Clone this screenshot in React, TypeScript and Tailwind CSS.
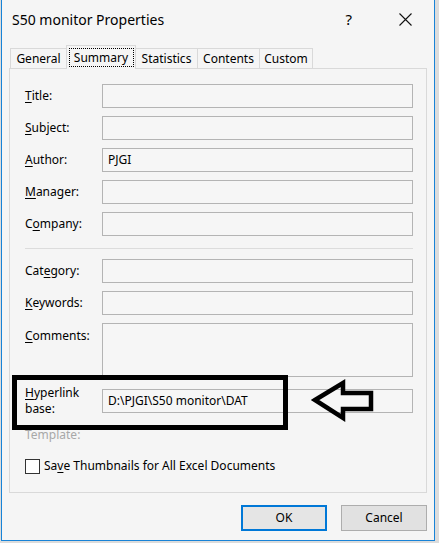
import React from "react";

const font = { fontFamily: '"Noto Sans", "Liberation Sans", sans-serif' };

const Label = ({ pre, acc, post }: { pre?: string; acc: string; post: string }) => (
  <span>
    {pre}
    <span className="underline underline-offset-2 decoration-1">{acc}</span>
    {post}
  </span>
);

const Field = ({ label, value, tall }: { label: React.ReactNode; value?: string; tall?: boolean }) => (
  <div className={`flex ${tall ? "items-start" : "items-center"}`}>
    <div className={`w-[77px] shrink-0 ${tall ? "pt-[4px]" : ""}`}>{label}</div>
    <div
      className={`w-[311px] ${tall ? "h-[54px]" : "h-[24px]"} border border-[#b4b4b4] bg-[#f6f6f6] px-[5px] flex ${tall ? "items-start" : "items-center"} text-black`}
    >
      {value}
    </div>
  </div>
);

export default function App() {
  return (
    <div className="relative w-[439px] h-[543px] overflow-hidden bg-[#dcdcdc] text-[12px] text-black" style={font}>
      <div className="ml-[1px] w-[434px] h-[541px] border-x border-b border-[#1883d7] bg-[#f5f5f5] flex flex-col">
        {/* Title bar */}
        <div className="h-[40px] flex items-center pl-[10px] pr-[22px] shrink-0">
          <span className="text-[14px] pb-[2px]">S50 monitor Properties</span>
          <span className="ml-auto text-[15px] pb-[2px]">?</span>
          <svg className="ml-[47px] mb-[2px]" width="13" height="13" viewBox="0 0 13 13">
            <path d="M0.5 0.5 L12.5 12.5 M12.5 0.5 L0.5 12.5" stroke="#111" strokeWidth="1.1" />
          </svg>
        </div>

        {/* Tabs */}
        <div className="flex items-end h-[28px] pl-[8px] shrink-0 relative z-10">
          <div className="h-[21px] w-[56px] flex items-center justify-center border-t border-l border-[#d9d9d9] -mb-px">General</div>
          <div className="h-[24px] w-[70px] flex items-center justify-center border-x border-t border-[#d9d9d9] bg-[#f5f5f5] -mb-px">
            <span className="h-[19px] w-[65px] border border-dotted border-black flex items-center justify-center">Summary</span>
          </div>
          <div className="h-[21px] w-[62px] flex items-center justify-center border-t border-r border-[#d9d9d9] -mb-px">Statistics</div>
          <div className="h-[21px] w-[62px] flex items-center justify-center border-t border-r border-[#d9d9d9] -mb-px">Contents</div>
          <div className="h-[21px] w-[53px] flex items-center justify-center border-t border-r border-[#d9d9d9] -mb-px">Custom</div>
        </div>

        {/* Panel */}
        <div className="ml-[7px] w-[418px] h-[425px] border border-[#d9d9d9] pl-[15px] pt-[15px] flex flex-col shrink-0">
          <div className="flex flex-col gap-[8px]">
            <Field label={<Label acc="T" post="itle:" />} />
            <Field label={<Label acc="S" post="ubject:" />} />
            <Field label={<Label acc="A" post="uthor:" />} value="PJGI" />
            <Field label={<Label acc="M" post="anager:" />} />
            <Field label={<Label pre="C" acc="o" post="mpany:" />} />
          </div>
          <div className="w-[388px] h-px bg-[#dcdcdc] mt-[12px] mb-[10px]" />
          <div className="flex flex-col gap-[8px]">
            <Field label={<Label pre="Cat" acc="e" post="gory:" />} />
            <Field label={<Label acc="K" post="eywords:" />} />
            <Field label={<Label acc="C" post="omments:" />} tall />
            <div className="flex items-center">
              <div className="w-[77px] shrink-0 leading-[16px]">
                <Label acc="H" post="yperlink" />
                <br />
                base:
              </div>
              <div className="w-[311px] h-[24px] border border-[#b4b4b4] bg-[#f6f6f6] px-[5px] flex items-center">
                D:\PJGI\S50 monitor\DAT
              </div>
            </div>
          </div>
          <div className="h-[24px] flex items-center mt-[6px] text-[#a8a8a8]">Template:</div>
          <div className="flex items-center mt-[10px]">
            <div className="w-[15px] h-[15px] border border-[#333] bg-white" />
            <span className="ml-[4px]">
              Sa<span className="underline underline-offset-2 decoration-1">v</span>e Thumbnails for All Excel Documents
            </span>
          </div>
        </div>

        {/* Buttons */}
        <div className="flex justify-end gap-[14px] mt-[12px] mr-[7px]">
          <button className="w-[86px] h-[26px] border-2 border-[#0078d7] bg-[#e5e5e5] text-black">OK</button>
          <button className="w-[86px] h-[26px] border border-[#adadad] bg-[#e1e1e1] text-black">Cancel</button>
        </div>
      </div>

      {/* Annotation box */}
      <div className="absolute left-[12px] top-[375px] w-[276px] h-[55px] border-[5px] border-black" />
      {/* Annotation arrow */}
      <svg className="absolute left-[308px] top-[378px]" width="70" height="46" viewBox="0 0 70 46">
        <polygon
          points="7,22 35,5 35,15 63,15 63,31 35,31 35,40"
          fill="none"
          stroke="black"
          strokeWidth="4.5"
          strokeLinejoin="miter"
        />
      </svg>
    </div>
  );
}
